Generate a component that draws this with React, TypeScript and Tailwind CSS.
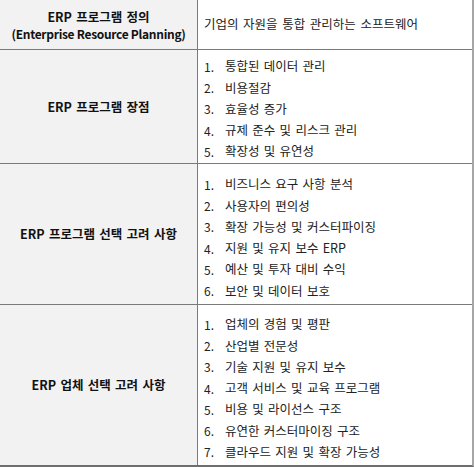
import React from "react";

const font = { fontFamily: '"Malgun Gothic", "Noto Sans CJK KR", sans-serif' };

function Items({ items }: { items: string[] }) {
  return (
    <div className="flex flex-col">
      {items.map((t, i) => (
        <div key={i} className="flex h-[21.3px] items-center text-[12.5px] [word-spacing:1.5px] text-[#222]">
          <span className="w-[21px] shrink-0 text-[12px]">{i + 1}.</span>
          <span>{t}</span>
        </div>
      ))}
    </div>
  );
}

export default function App() {
  const rows: { h: string; pt: string; left: React.ReactNode; right: React.ReactNode }[] = [
    {
      h: "h-[50px]",
      pt: "",
      left: (
        <>
          <div className="leading-[17px]">ERP 프로그램 정의</div>
          <div className="leading-[17px] text-[12px] tracking-[-0.3px] [word-spacing:0px]">(Enterprise Resource Planning)</div>
        </>
      ),
      right: <div className="text-[12.5px] [word-spacing:1.8px] text-[#222]">기업의 자원을 통합 관리하는 소프트웨어</div>,
    },
    {
      h: "h-[114px]",
      pt: "pt-[6px]",
      left: <div>ERP 프로그램 장점</div>,
      right: (
        <Items items={["통합된 데이터 관리", "비용절감", "효율성 증가", "규제 준수 및 리스크 관리", "확장성 및 유연성"]} />
      ),
    },
    {
      h: "h-[141px]",
      pt: "pt-[10px]",
      left: <div>ERP 프로그램 선택 고려 사항</div>,
      right: (
        <Items
          items={[
            "비즈니스 요구 사항 분석",
            "사용자의 편의성",
            "확장 가능성 및 커스터파이징",
            "지원 및 유지 보수 ERP",
            "예산 및 투자 대비 수익",
            "보안 및 데이터 보호",
          ]}
        />
      ),
    },
    {
      h: "h-[160px]",
      pt: "pt-[9px]",
      left: <div>ERP 업체 선택 고려 사항</div>,
      right: (
        <Items
          items={[
            "업체의 경험 및 평판",
            "산업별 전문성",
            "기술 지원 및 유지 보수",
            "고객 서비스 및 교육 프로그램",
            "비용 및 라이선스 구조",
            "유연한 커스터마이징 구조",
            "클라우드 지원 및 확장 가능성",
          ]}
        />
      ),
    },
  ];
  return (
    <div className="w-[474px] h-[467px] bg-white overflow-hidden" style={font}>
      <div className="w-[474px] border-r-2 border-[#a6a6a6] border-b-2 border-b-[#6e6e6e]">
        {rows.map((r, i) => (
          <div
            key={i}
            className={`flex ${r.h} ${i < rows.length - 1 ? "border-b border-[#7a7a7a]" : ""}`}
          >
            <div className="w-[198px] shrink-0 bg-[#f2f2f2] border-r border-[#7a7a7a] flex flex-col items-center justify-center text-center text-[12.5px] [word-spacing:1.5px] font-bold leading-[16px] text-[#111]">
              {r.left}
            </div>
            <div className={`flex-1 pl-[6px] ${r.pt ? r.pt : "flex items-center"}`}>{r.right}</div>
          </div>
        ))}
      </div>
    </div>
  );
}
